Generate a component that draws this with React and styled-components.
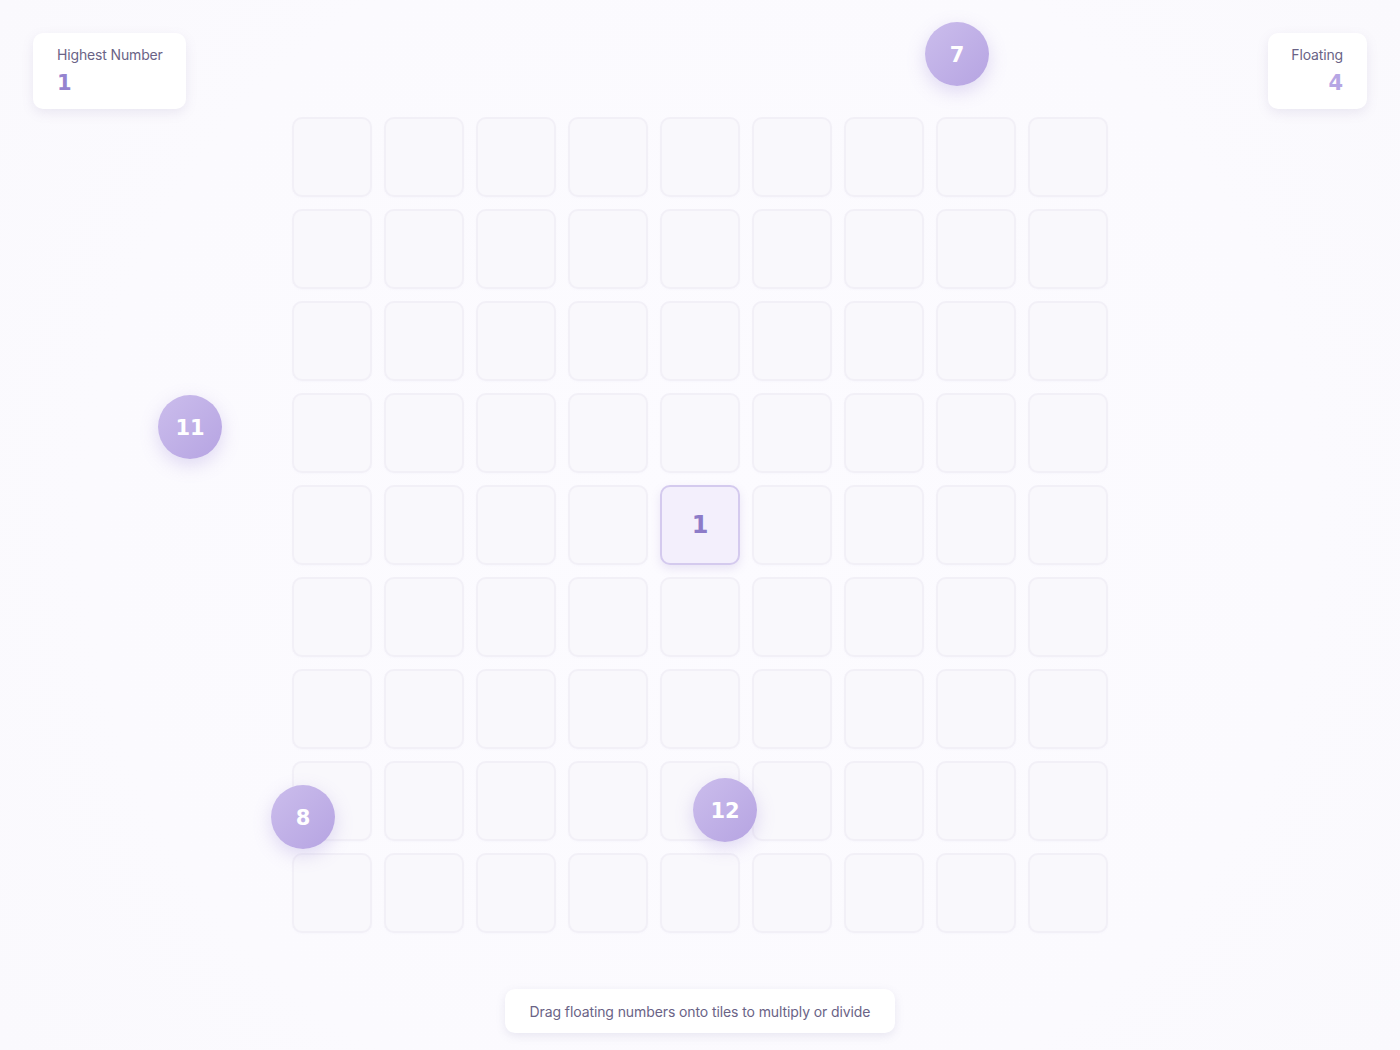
import React from 'react';
import styled, { createGlobalStyle } from 'styled-components';

const GlobalStyle = createGlobalStyle`
  html, body {
    margin: 0;
    padding: 0;
    background: #fbfafe;
  }
  * { box-sizing: border-box; }
`;

const Page = styled.div`
  position: relative;
  width: 1400px;
  height: 1050px;
  overflow: hidden;
  background: radial-gradient(circle at 50% 50%, #fcfbff 0%, #fbfafe 70%, #faf9fd 100%);
  font-family: 'Inter', 'Noto Sans', sans-serif;
  display: flex;
  flex-direction: column;
  align-items: center;
  padding-top: 117px;
`;

const Board = styled.div`
  display: grid;
  grid-template-columns: repeat(9, 80px);
  grid-auto-rows: 80px;
  gap: 12px;
`;

const Tile = styled.div`
  border-radius: 10px;
  display: flex;
  align-items: center;
  justify-content: center;
  background: ${(p) => (p.$filled ? '#f3effc' : '#f9f8fc')};
  border: ${(p) => (p.$filled ? '2px solid #d4caee' : '2px solid #f2f0f7')};
  box-shadow: ${(p) =>
    p.$filled ? '0 4px 10px rgba(150, 130, 200, 0.18)' : '0 1px 2px rgba(180, 170, 210, 0.05)'};
  color: #8d7bc8;
  font-family: 'DejaVu Sans', sans-serif;
  font-weight: 700;
  font-size: 24px;
`;

const StatCard = styled.div`
  position: absolute;
  top: 33px;
  ${(p) => (p.$right ? 'right: 33px;' : 'left: 33px;')}
  width: ${(p) => p.$width}px;
  height: 76px;
  background: #ffffff;
  border-radius: 10px;
  box-shadow: 0 4px 12px rgba(120, 110, 160, 0.13);
  padding: 13px 24px 0 24px;
  display: flex;
  flex-direction: column;
  align-items: ${(p) => (p.$right ? 'flex-end' : 'flex-start')};
`;

const StatLabel = styled.div`
  font-size: 14px;
  color: #6a6386;
  line-height: 18px;
  white-space: nowrap;
  letter-spacing: -0.15px;
`;

const StatValue = styled.div`
  margin-top: 7px;
  font-family: 'DejaVu Sans', sans-serif;
  font-weight: 700;
  font-size: 21px;
  line-height: 24px;
  color: ${(p) => p.$color};
`;

const Bubble = styled.div`
  position: absolute;
  width: 64px;
  height: 64px;
  border-radius: 50%;
  background: linear-gradient(135deg, #cbbdec 0%, #b6a4e2 100%);
  box-shadow: 0 6px 18px rgba(160, 140, 215, 0.3);
  display: flex;
  align-items: center;
  justify-content: center;
  padding-top: 2px;
  color: #ffffff;
  font-family: 'DejaVu Sans', sans-serif;
  font-weight: 700;
  font-size: 21px;
`;

const Hint = styled.div`
  position: absolute;
  left: 505px;
  top: 989px;
  width: 390px;
  height: 44px;
  background: #ffffff;
  border-radius: 10px;
  box-shadow: 0 3px 10px rgba(120, 110, 160, 0.14);
  display: flex;
  align-items: center;
  justify-content: center;
  font-size: 14px;
  letter-spacing: -0.1px;
  white-space: nowrap;
  color: #6a6386;
`;

const bubbles = [
  { n: 7, x: 925, y: 22 },
  { n: 11, x: 158, y: 395 },
  { n: 8, x: 271, y: 785 },
  { n: 12, x: 693, y: 778 },
];

export default function App() {
  const tiles = [];
  for (let r = 0; r < 9; r++) {
    for (let c = 0; c < 9; c++) {
      const filled = r === 4 && c === 4;
      tiles.push(
        <Tile key={`${r}-${c}`} $filled={filled}>
          {filled ? '1' : null}
        </Tile>
      );
    }
  }

  return (
    <Page>
      <GlobalStyle />
      <StatCard $width={153}>
        <StatLabel>Highest Number</StatLabel>
        <StatValue $color="#9583cf">1</StatValue>
      </StatCard>
      <StatCard $right $width={99}>
        <StatLabel>Floating</StatLabel>
        <StatValue $color="#b6a6e4">4</StatValue>
      </StatCard>

      <Board>{tiles}</Board>

      {bubbles.map((b) => (
        <Bubble key={b.n} style={{ left: b.x, top: b.y }}>
          {b.n}
        </Bubble>
      ))}

      <Hint>Drag floating numbers onto tiles to multiply or divide</Hint>
    </Page>
  );
}
